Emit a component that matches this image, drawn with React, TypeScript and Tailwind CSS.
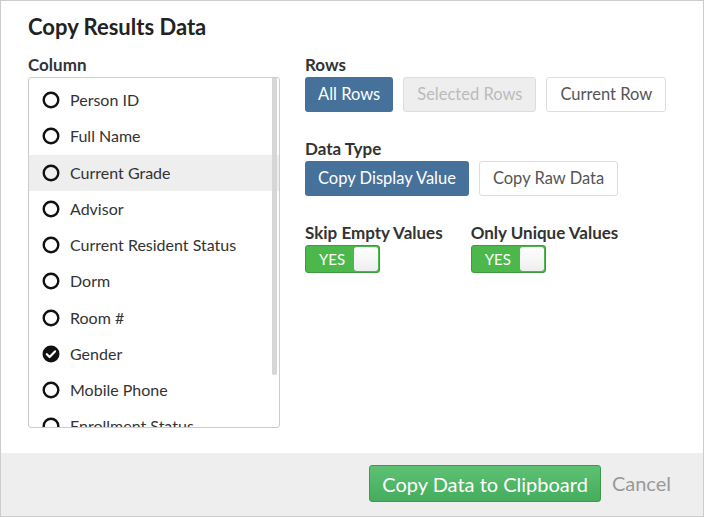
import React from "react";

const columns = [
  "Person ID",
  "Full Name",
  "Current Grade",
  "Advisor",
  "Current Resident Status",
  "Dorm",
  "Room #",
  "Gender",
  "Mobile Phone",
  "Enrollment Status",
];

function Radio({ checked }: { checked: boolean }) {
  if (checked) {
    return (
      <svg width="18" height="18" viewBox="0 0 18 18" className="shrink-0">
        <circle cx="9" cy="9" r="8.5" fill="#111" />
        <path d="M4.8 9.2l2.8 2.8 5.4-5.6" fill="none" stroke="#fff" strokeWidth="2.2" strokeLinecap="round" strokeLinejoin="round" />
      </svg>
    );
  }
  return (
    <svg width="18" height="18" viewBox="0 0 18 18" className="shrink-0">
      <circle cx="9" cy="9" r="7.3" fill="none" stroke="#111" strokeWidth="2.4" />
    </svg>
  );
}

function Toggle() {
  return (
    <div className="flex h-[28px] w-[75px] items-center justify-between rounded-[3px] border border-[#3d9a3d] bg-[#4cb84c] pl-[13px] pr-[1px]">
      <span className="text-[15px] text-white">YES</span>
      <div className="h-[24px] w-[24px] rounded-[3px] bg-gradient-to-b from-white to-[#eee]" />
    </div>
  );
}

export default function App() {
  return (
    <div
      className="flex h-[517px] w-[704px] flex-col border border-[#ccc] bg-white text-[#333]"
      style={{ fontFamily: "Lato, 'Liberation Sans', sans-serif" }}
    >
      <div className="flex-1 px-[27px] pt-[12px]">
        <h1 className="text-[22px] font-bold leading-[28px] text-[#222]">Copy Results Data</h1>
        <div className="mt-[14px] flex gap-[25px]">
          <div className="w-[252px]">
            <div className="text-[17px] font-bold leading-[20px]">Column</div>
            <div className="relative mt-[2px] h-[351px] overflow-hidden rounded-[3px] border border-[#ccc]">
              <div className="pt-[4px]">
                {columns.map((c) => (
                  <div
                    key={c}
                    className={`flex h-[36.25px] items-center gap-[10px] pl-[13px] text-[16px] text-[#333] ${c === "Current Grade" ? "bg-[#eee]" : ""}`}
                  >
                    <Radio checked={c === "Gender"} />
                    <span>{c}</span>
                  </div>
                ))}
              </div>
              <div className="absolute right-[2px] top-0 h-[297px] w-[5px] rounded-b-[2px] bg-[#d6d6d6]" />
            </div>
          </div>
          <div className="flex-1">
            <div className="text-[17px] font-bold leading-[20px]">Rows</div>
            <div className="mt-[2px] flex gap-[10px]">
              <button className="h-[35px] rounded-[3px] bg-[#45719a] px-[13px] text-[16.5px] text-white">All Rows</button>
              <button className="h-[35px] rounded-[3px] border border-[#ddd] bg-[#eee] px-[13px] text-[16.5px] text-[#bbb]">Selected Rows</button>
              <button className="h-[35px] rounded-[3px] border border-[#ddd] bg-white px-[13px] text-[16.5px] text-[#555]">Current Row</button>
            </div>
            <div className="mt-[27px] text-[17px] font-bold leading-[20px]">Data Type</div>
            <div className="mt-[2px] flex gap-[10px]">
              <button className="h-[35px] rounded-[3px] bg-[#45719a] px-[13px] text-[16.5px] text-white">Copy Display Value</button>
              <button className="h-[35px] rounded-[3px] border border-[#ddd] bg-white px-[13px] text-[16.5px] text-[#555]">Copy Raw Data</button>
            </div>
            <div className="mt-[27px] flex gap-[28px]">
              <div className="flex flex-col gap-[2px]">
                <div className="text-[17px] font-bold leading-[20px]">Skip Empty Values</div>
                <Toggle />
              </div>
              <div className="flex flex-col gap-[2px]">
                <div className="text-[17px] font-bold leading-[20px]">Only Unique Values</div>
                <Toggle />
              </div>
            </div>
          </div>
        </div>
      </div>
      <div className="flex h-[63px] items-start justify-end gap-[11px] bg-[#eee] pr-[32px] pt-[12px]">
        <button className="h-[37px] rounded-[3px] border border-[#3d9a4d] bg-gradient-to-b from-[#5dc173] to-[#45ad5d] px-[12px] text-[20px] text-white">
          Copy Data to Clipboard
        </button>
        <span className="text-[20px] leading-[37px] text-[#999]">Cancel</span>
      </div>
    </div>
  );
}
